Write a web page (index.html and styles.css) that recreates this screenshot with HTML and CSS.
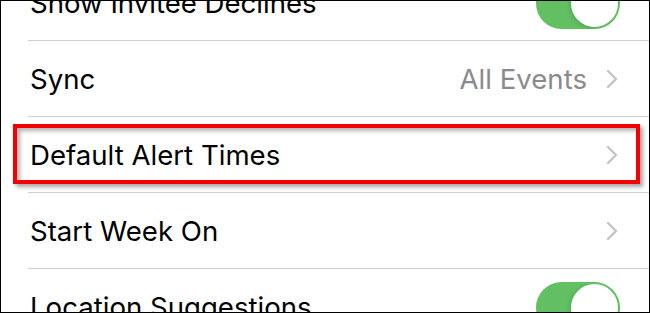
FILE: index.html
```
<!DOCTYPE html>
<html>
<head>
<meta charset="utf-8">
<link rel="stylesheet" href="styles.css">
</head>
<body>
<div class="frame">
  <div class="list">
    <div class="row">
      <span class="label">Show Invitee Declines</span>
      <span class="toggle"><span class="knob"></span></span>
    </div>
    <div class="row">
      <span class="label">Sync</span>
      <span class="value">All Events</span>
      <svg class="chev" width="12" height="20" viewBox="0 0 12 20"><path d="M2 2 L10 10 L2 18" fill="none" stroke="#c4c4c7" stroke-width="2.4" stroke-linecap="round" stroke-linejoin="round"/></svg>
    </div>
    <div class="row highlighted">
      <span class="label">Default Alert Times</span>
      <svg class="chev" width="12" height="20" viewBox="0 0 12 20"><path d="M2 2 L10 10 L2 18" fill="none" stroke="#c4c4c7" stroke-width="2.4" stroke-linecap="round" stroke-linejoin="round"/></svg>
      <span class="callout"></span>
    </div>
    <div class="row">
      <span class="label">Start Week On</span>
      <svg class="chev" width="12" height="20" viewBox="0 0 12 20"><path d="M2 2 L10 10 L2 18" fill="none" stroke="#c4c4c7" stroke-width="2.4" stroke-linecap="round" stroke-linejoin="round"/></svg>
    </div>
    <div class="row">
      <span class="label">Location Suggestions</span>
      <span class="toggle"><span class="knob"></span></span>
    </div>
  </div>
</div>
</body>
</html>
```
FILE: styles.css
```
html, body {
  margin: 0;
  padding: 0;
  background: #fff;
}
.frame {
  width: 650px;
  height: 313px;
  box-sizing: border-box;
  border: 1px solid #000;
  overflow: hidden;
  background: #fff;
  font-family: "Inter", "Liberation Sans", sans-serif;
}
.list {
  margin-top: -36px;
}
.row {
  position: relative;
  height: 75px;
  margin-left: 27px;
  padding-left: 2px;
  padding-right: 29px;
  border-bottom: 1px solid #d0d0d4;
  display: flex;
  align-items: center;
}
.label {
  flex: 1;
  font-size: 27.6px;
  color: #000;
  white-space: nowrap;
}
.value {
  font-size: 27.6px;
  color: #8a8a8e;
  margin-right: 19px;
}
.chev {
  margin-right: 2px;
  display: block;
}
.toggle {
  width: 84px;
  height: 51px;
  border-radius: 26px;
  background: #62c063;
  display: flex;
  align-items: center;
  justify-content: flex-end;
  padding-right: 2px;
  box-sizing: border-box;
  margin-top: 2px;
}
.knob {
  width: 47px;
  height: 47px;
  border-radius: 50%;
  background: #fff;
  box-shadow: -2px 1px 4px rgba(0, 0, 0, 0.12);
}
.callout {
  position: absolute;
  left: -15px;
  top: 7px;
  width: 627px;
  height: 60px;
  box-sizing: border-box;
  border: 4px solid #f40000;
  box-shadow: 3px 3px 4px rgba(0, 0, 0, 0.35), inset 3px 3px 4px rgba(0, 0, 0, 0.3);
}
```
